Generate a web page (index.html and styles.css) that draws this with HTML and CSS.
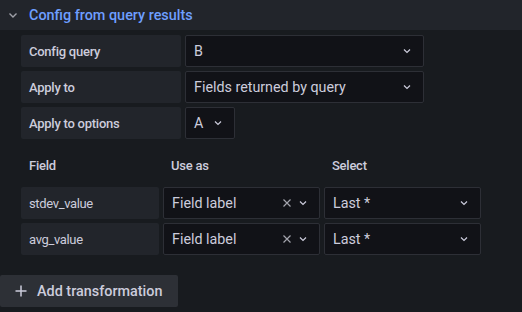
FILE: index.html
```html
<!DOCTYPE html>
<html lang="en">
  <head>
    <meta charset="UTF-8" />
    <meta name="viewport" content="width=device-width, initial-scale=1.0" />
    <title>Config from query results</title>
    <link rel="stylesheet" href="styles.css">
  </head>
  <body>
    <div class="section-header">
      <svg class="chevron" width="16" height="16" viewBox="0 0 16 16">
        <path d="M4.5 6.5 L8 10 L11.5 6.5" fill="none" stroke="#9fa0a8" stroke-width="1.4" />
      </svg>
      <span class="section-title">Config from query results</span>
    </div>

    <div class="section-body">
      <div class="field-row">
        <div class="label wide">Config query</div>
        <div class="select w-large">
          <span class="value">B</span>
          <svg class="caret" width="12" height="12" viewBox="0 0 12 12"><path d="M3 4.5 L6 7.5 L9 4.5" fill="none" stroke="#ccccdc" stroke-width="1.2" /></svg>
        </div>
      </div>
      <div class="field-row">
        <div class="label wide">Apply to</div>
        <div class="select w-large">
          <span class="value">Fields returned by query</span>
          <svg class="caret" width="12" height="12" viewBox="0 0 12 12"><path d="M3 4.5 L6 7.5 L9 4.5" fill="none" stroke="#ccccdc" stroke-width="1.2" /></svg>
        </div>
      </div>
      <div class="field-row">
        <div class="label wide">Apply to options</div>
        <div class="select w-small">
          <span class="value">A</span>
          <svg class="caret" width="12" height="12" viewBox="0 0 12 12"><path d="M3 4.5 L6 7.5 L9 4.5" fill="none" stroke="#ccccdc" stroke-width="1.2" /></svg>
        </div>
      </div>

      <div class="mapping-head">
        <div class="col-field">Field</div>
        <div class="col-use">Use as</div>
        <div class="col-select">Select</div>
      </div>

      <div class="field-row">
        <div class="label field-name">stdev_value</div>
        <div class="select w-mid">
          <span class="value">Field label</span>
          <svg class="clear" width="12" height="12" viewBox="0 0 12 12"><path d="M2.5 2.5 L9.5 9.5 M9.5 2.5 L2.5 9.5" fill="none" stroke="#a3a4ad" stroke-width="1.2" /></svg>
          <svg class="caret" width="12" height="12" viewBox="0 0 12 12"><path d="M3 4.5 L6 7.5 L9 4.5" fill="none" stroke="#ccccdc" stroke-width="1.2" /></svg>
        </div>
        <div class="select w-mid">
          <span class="value">Last *</span>
          <svg class="caret" width="12" height="12" viewBox="0 0 12 12"><path d="M3 4.5 L6 7.5 L9 4.5" fill="none" stroke="#ccccdc" stroke-width="1.2" /></svg>
        </div>
      </div>
      <div class="field-row">
        <div class="label field-name">avg_value</div>
        <div class="select w-mid">
          <span class="value">Field label</span>
          <svg class="clear" width="12" height="12" viewBox="0 0 12 12"><path d="M2.5 2.5 L9.5 9.5 M9.5 2.5 L2.5 9.5" fill="none" stroke="#a3a4ad" stroke-width="1.2" /></svg>
          <svg class="caret" width="12" height="12" viewBox="0 0 12 12"><path d="M3 4.5 L6 7.5 L9 4.5" fill="none" stroke="#ccccdc" stroke-width="1.2" /></svg>
        </div>
        <div class="select w-mid">
          <span class="value">Last *</span>
          <svg class="caret" width="12" height="12" viewBox="0 0 12 12"><path d="M3 4.5 L6 7.5 L9 4.5" fill="none" stroke="#ccccdc" stroke-width="1.2" /></svg>
        </div>
      </div>
    </div>

    <button class="add-btn">
      <svg width="14" height="14" viewBox="0 0 14 14"><path d="M7 1.5 V12.5 M1.5 7 H12.5" fill="none" stroke="#ccccdc" stroke-width="1.5" /></svg>
      <span>Add transformation</span>
    </button>
  </body>
</html>
```

FILE: styles.css
```css
body {
  margin: 0;
  background-color: #181b1f;
  color: #ccccdc;
  font-family: Roboto, "Noto Sans", sans-serif;
  font-size: 14px;
  width: 522px;
  height: 312px;
  overflow: hidden;
}
.section-header {
  display: flex;
  align-items: center;
  height: 30px;
  background-color: #22252b;
  padding-left: 5px;
}
.chevron {
  margin-right: 8px;
}
.section-title {
  color: #6e9fff;
  font-size: 14.4px;
  font-weight: 500;
}
.section-body {
  padding: 5px 0 0 21px;
}
.field-row {
  display: flex;
  gap: 4px;
  margin-bottom: 4px;
}
.label {
  display: flex;
  align-items: center;
  height: 32px;
  padding: 0 8px;
  background-color: #22252b;
  border-radius: 2px;
  box-sizing: border-box;
  font-size: 13px;
  letter-spacing: -0.25px;
  font-weight: 500;
  color: #ccccdc;
}
.label.wide {
  width: 160px;
}
.label.field-name {
  width: 138px;
  font-weight: 400;
  letter-spacing: -0.35px;
}
.select {
  display: flex;
  align-items: center;
  height: 32px;
  box-sizing: border-box;
  background-color: #111217;
  border: 1px solid #2d2f36;
  border-radius: 2px;
  padding: 0 10px 0 8px;
  gap: 4px;
}
.select .value {
  flex: 1;
  color: #ccccdc;
  font-size: 14.3px;
  white-space: nowrap;
}
.w-large {
  width: 239px;
}
.w-small {
  width: 50px;
}
.w-mid {
  width: 157px;
}
.mapping-head {
  display: flex;
  gap: 4px;
  height: 44px;
  align-items: center;
  font-size: 13px;
  letter-spacing: -0.25px;
  font-weight: 500;
}
.col-field {
  width: 138px;
  padding-left: 8px;
  box-sizing: border-box;
}
.col-use,
.col-select {
  width: 157px;
  padding-left: 8px;
  box-sizing: border-box;
}
.add-btn {
  display: flex;
  align-items: center;
  gap: 9px;
  margin-top: 20px;
  height: 32px;
  width: 178px;
  padding: 0 0 0 14px;
  border: none;
  border-radius: 2px;
  background-color: #2d3036;
  color: #ccccdc;
  font-family: Roboto, "Noto Sans", sans-serif;
  font-size: 14.4px;
  font-weight: 500;
}
```
